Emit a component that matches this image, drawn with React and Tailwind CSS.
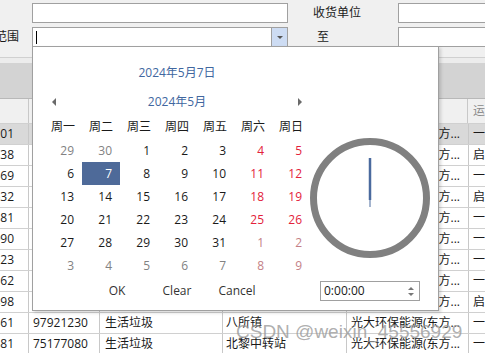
const weekdays = ['周一', '周二', '周三', '周四', '周五', '周六', '周日']

// kind: p = other month, c = this month
const days = [
  [29, 'p'], [30, 'p'], [1, 'c'], [2, 'c'], [3, 'c'], [4, 'c'], [5, 'c'],
  [6, 'c'], [7, 's'], [8, 'c'], [9, 'c'], [10, 'c'], [11, 'c'], [12, 'c'],
  [13, 'c'], [14, 'c'], [15, 'c'], [16, 'c'], [17, 'c'], [18, 'c'], [19, 'c'],
  [20, 'c'], [21, 'c'], [22, 'c'], [23, 'c'], [24, 'c'], [25, 'c'], [26, 'c'],
  [27, 'c'], [28, 'c'], [29, 'c'], [30, 'c'], [31, 'c'], [1, 'p'], [2, 'p'],
  [3, 'p'], [4, 'p'], [5, 'p'], [6, 'p'], [7, 'p'], [8, 'p'], [9, 'p'],
]

const rows = [
  ['20240101', '97920101', '八所镇', '一'],
  ['20240738', '97920738', '八所镇', '启'],
  ['20240369', '75170369', '北黎中转站', '一'],
  ['20240532', '97920532', '八所镇', '启'],
  ['20240381', '75170381', '北黎中转站', '一'],
  ['20240090', '97920090', '八所镇', '一'],
  ['20240523', '75170523', '北黎中转站', '一'],
  ['20240162', '97920162', '八所镇', '一'],
  ['20240898', '75170898', '北黎中转站', '启'],
  ['20240361', '97921230', '八所镇', '一'],
  ['20240381', '75177080', '北黎中转站', '一'],
]

function dayColor(kind, col) {
  const weekend = col >= 5
  if (kind === 's') return 'bg-[#4e6a99] text-white'
  if (kind === 'p') return weekend ? 'text-[#c47f86]' : 'text-[#828282]'
  return weekend ? 'text-[#e3223b]' : 'text-[#1a1a1a]'
}

function Calendar() {
  return (
    <div className="w-[266px] ml-[11px] pt-[14px] flex flex-col">
      <div className="h-[24px] flex items-center justify-center text-[12px] text-[#41679f]">
        2024年5月7日
      </div>
      <div className="mt-[7px] h-[20px] flex items-center justify-between px-[8px]">
        <span className="w-0 h-0 border-y-[4px] border-y-transparent border-r-[4px] border-r-[#6a6a6a]" />
        <span className="text-[12px] text-[#41679f]">2024年5月</span>
        <span className="w-0 h-0 border-y-[4px] border-y-transparent border-l-[4px] border-l-[#6a6a6a]" />
      </div>
      <div className="mt-[4px] h-[22px] grid grid-cols-7">
        {weekdays.map(w => (
          <div key={w} className="flex items-center justify-center text-[12px] text-[#1a1a1a]">{w}</div>
        ))}
      </div>
      <div className="mt-[1px] grid grid-cols-7">
        {days.map(([d, kind], i) => (
          <div
            key={i}
            className={`h-[23px] flex items-center justify-end pr-[8px] text-[12px] ${dayColor(kind, i % 7)}`}
          >
            {d}
          </div>
        ))}
      </div>
      <div className="mt-[4px] h-[20px] flex items-center justify-center text-[12px] text-[#333]">
        <span className="w-[60px] text-center">OK</span>
        <span className="w-[60px] text-center">Clear</span>
        <span className="w-[60px] text-center">Cancel</span>
      </div>
    </div>
  )
}

function Clock() {
  return (
    <div className="w-[120px] pt-[91px] flex flex-col">
      <svg width="120" height="120" viewBox="0 0 120 120">
        <circle cx="60" cy="60" r="56.5" fill="none" stroke="#808080" strokeWidth="7" />
        <line x1="60" y1="20" x2="60" y2="62" stroke="#4a6a9e" strokeWidth="2.5" />
        <line x1="60" y1="62" x2="60" y2="69" stroke="#4a6a9e" strokeWidth="1" />
      </svg>
      <div className="mt-[23px] ml-[10px] w-[100px] h-[20px] border border-[#a0a0a0] bg-white flex items-center justify-between pl-[3px] pr-[5px]">
        <span className="text-[12px] text-[#1a1a1a]">0:00:00</span>
        <span className="flex flex-col gap-[3px]">
          <span className="w-0 h-0 border-x-[3px] border-x-transparent border-b-[3px] border-b-[#777]" />
          <span className="w-0 h-0 border-x-[3px] border-x-transparent border-t-[3px] border-t-[#777]" />
        </span>
      </div>
    </div>
  )
}

export default function App() {
  return (
    <div className="relative w-[485px] h-[353px] overflow-hidden bg-[#f0f0f0] font-['Open_Sans','Noto_Sans_CJK_SC',sans-serif] text-[#1a1a1a]">
      {/* Filter form */}
      <div className="pt-[3px] flex flex-col gap-[4px]">
        <div className="h-[20px] flex">
          <div className="w-[32px]" />
          <div className="w-[256px] border border-[#a0a0a0] bg-white" />
          <div className="w-[110px] flex items-center pl-[25px] text-[12px]">收货单位</div>
          <div className="flex-1 border border-r-0 border-[#a0a0a0] bg-white" />
        </div>
        <div className="h-[20px] flex">
          <div className="w-[32px] flex items-center justify-end pr-[13px] overflow-hidden whitespace-nowrap text-[12px]">
            日期范围
          </div>
          <div className="w-[256px] border border-[#a0a0a0] bg-white flex">
            <div className="flex-1 flex items-center pl-[3px]">
              <span className="w-px h-[13px] bg-black" />
            </div>
            <div className="w-[16px] border-l border-[#a0a0a0] bg-[#cddcf3] flex items-center justify-center">
              <span className="w-0 h-0 border-x-[3px] border-x-transparent border-t-[3px] border-t-[#555]" />
            </div>
          </div>
          <div className="w-[110px] flex items-center pl-[29px] text-[12px]">至</div>
          <div className="flex-1 border border-r-0 border-[#a0a0a0] bg-white" />
        </div>
      </div>

      {/* Grid */}
      <div className="mt-[10px] border-t border-[#d0d0d0]">
        <div className="h-[5px] bg-[#ececec]" />
        <div className="h-[36px] bg-[#d3d3d3] border-b border-[#b8b8b8]" />
        <div className="h-[25px] flex bg-[#f0f0f0] border-b border-[#d0d0d0] text-[12px]">
          <div className="w-[29px] border-r border-[#c8c8c8]" />
          <div className="w-[71px] border-r border-[#c8c8c8]" />
          <div className="w-[123px] border-r border-[#c8c8c8]" />
          <div className="w-[124px] border-r border-[#c8c8c8]" />
          <div className="w-[122px] border-r border-[#c8c8c8]" />
          <div className="flex-1 flex items-center pl-[5px] text-[#8a8a8a]">运</div>
        </div>
        {rows.map(([id, no, place, st], i) => (
          <div
            key={i}
            className={`h-[21px] flex border-b border-[#d0d0d0] text-[12px] ${i === 0 ? 'bg-[#d9d9d9]' : 'bg-white'}`}
          >
            <div className="w-[29px] border-r border-[#c8c8c8] flex items-center justify-end pr-[14px] overflow-hidden whitespace-nowrap">
              {id}
            </div>
            <div className="w-[71px] border-r border-[#c8c8c8] flex items-center pl-[4px]">{no}</div>
            <div className="w-[123px] border-r border-[#c8c8c8] flex items-center pl-[5px]">生活垃圾</div>
            <div className="w-[124px] border-r border-[#c8c8c8] flex items-center pl-[3px] whitespace-nowrap">{place}</div>
            <div className="w-[122px] border-r border-[#c8c8c8] flex items-center pl-[4px] whitespace-nowrap overflow-hidden">
              光大环保能源(东方...
            </div>
            <div className="flex-1 flex items-center pl-[4px]">{st}</div>
          </div>
        ))}
      </div>

      {/* Date picker popup */}
      <div className="absolute left-[32px] top-[46px] w-[407px] h-[265px] bg-white border border-[#a0a0a0] shadow-[2px_2px_3px_rgba(0,0,0,0.15)] flex">
        <Calendar />
        <Clock />
      </div>

      {/* Watermark */}
      <div className="absolute left-[236px] top-[318px] text-[19px] font-['Liberation_Sans',sans-serif] text-[#9a9a9a]/80 whitespace-nowrap">
        CSDN @weixin_45556929
      </div>
    </div>
  )
}
